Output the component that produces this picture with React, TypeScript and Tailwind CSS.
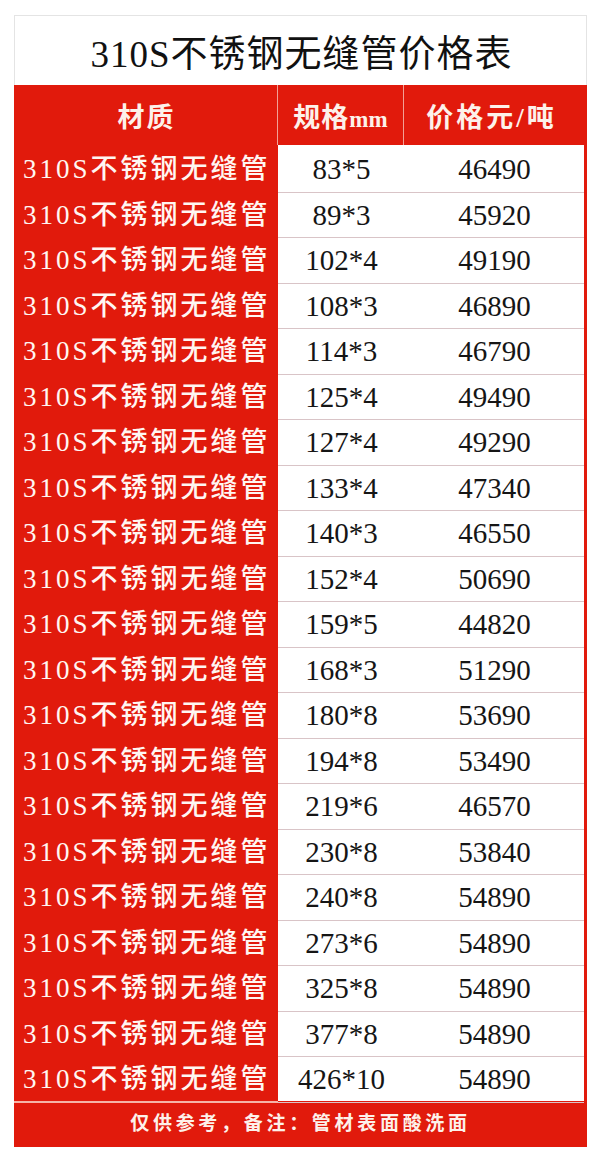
import React from "react";

// 规格 / 价格 rows of the price table
const rows: [string, string][] = [
  ["83*5", "46490"],
  ["89*3", "45920"],
  ["102*4", "49190"],
  ["108*3", "46890"],
  ["114*3", "46790"],
  ["125*4", "49490"],
  ["127*4", "49290"],
  ["133*4", "47340"],
  ["140*3", "46550"],
  ["152*4", "50690"],
  ["159*5", "44820"],
  ["168*3", "51290"],
  ["180*8", "53690"],
  ["194*8", "53490"],
  ["219*6", "46570"],
  ["230*8", "53840"],
  ["240*8", "54890"],
  ["273*6", "54890"],
  ["325*8", "54890"],
  ["377*8", "54890"],
  ["426*10", "54890"],
];

const font = { fontFamily: '"Liberation Serif", "Noto Sans CJK SC", serif' };

export default function App() {
  return (
    <div className="w-[602px] h-[1162px] bg-white pt-[15px] pl-[14px]" style={font}>
      <div className="w-[573px]">
        {/* title */}
        <div className="h-[70px] border border-b-0 border-[#e4e4e4] flex items-center justify-center pl-[2px] pt-[7px]">
          <span className="text-[37px] tracking-[1px] text-[#111] leading-none">
            310S不锈钢无缝管价格表
          </span>
        </div>

        {/* header */}
        <div className="grid grid-cols-[264px_126px_183px] h-[60px] bg-[#e11a0c] text-[#fdf1ea] font-bold">
          <div className="flex items-center justify-center border-r border-[#f2a096] text-[27px] tracking-[2px] pt-[6px] pl-[2px]">
            材质
          </div>
          <div className="flex items-center justify-center border-r border-[#f2a096] pt-[6px]">
            <span className="text-[27px] tracking-[1px]">规格</span>
            <span className="text-[23px] tracking-[0px] pt-[4px]">mm</span>
          </div>
          <div className="flex items-center justify-center text-[27px] tracking-[3px] pt-[6px] pr-[8px]">
            价格元/吨
          </div>
        </div>

        {/* body */}
        <div className="border-r-[3px] border-[#e11a0c]">
          {rows.map(([spec, price], i) => (
            <div key={i} className="grid grid-cols-[264px_127px_179px] h-[45.5px]">
              <div className="bg-[#e11a0c] border-b-2 border-[#f6b4a8] flex items-center pl-[9px] pt-[3px] text-[27px] tracking-[3px] font-medium text-[#fff6f2] whitespace-nowrap">
                310S不锈钢无缝管
              </div>
              <div className="border-b-[1.5px] border-[#d9c4c7] flex items-center justify-center pt-[3px] text-[29px] text-[#151515]">
                {spec}
              </div>
              <div className="border-b-[1.5px] border-[#d9c4c7] flex items-center justify-center pt-[3px] text-[29px] text-[#151515]">
                {price}
              </div>
            </div>
          ))}
        </div>

        {/* footer */}
        <div className="h-[46px] bg-[#e11a0c] flex items-center justify-center text-[19px] tracking-[3.7px] font-bold text-[#fdf1ea] pt-[2px]">
          仅供参考，备注：管材表面酸洗面
        </div>
      </div>
    </div>
  );
}
